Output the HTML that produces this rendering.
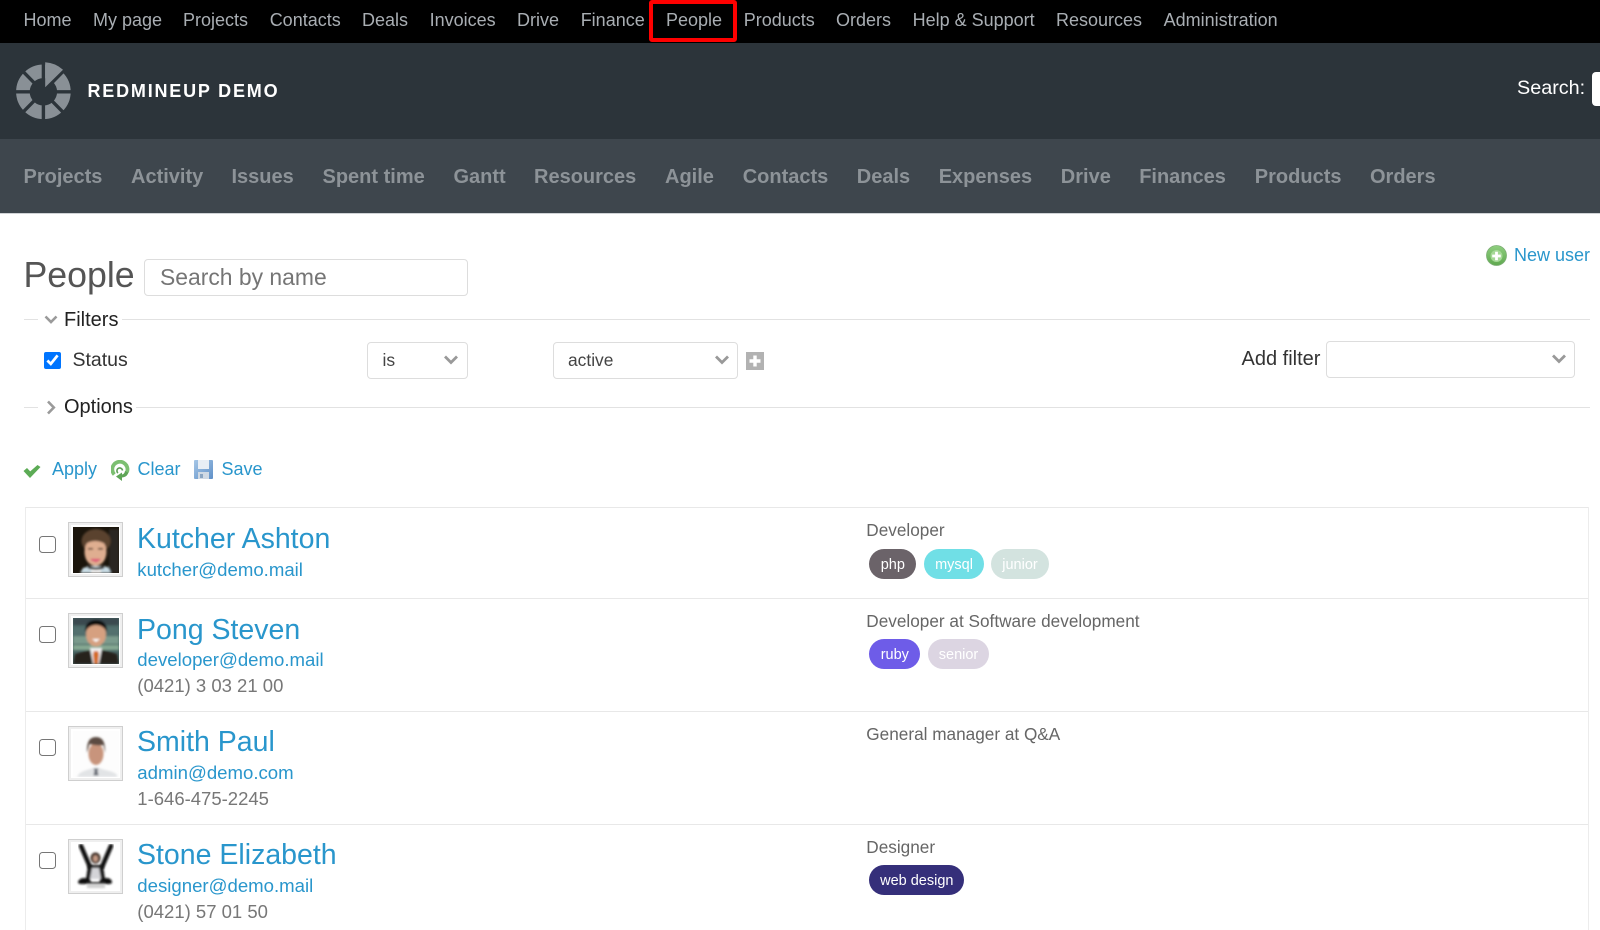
<!DOCTYPE html>
<html><head><meta charset="utf-8"><title>People</title>
<style>
html,body{margin:0;padding:0;background:#fff}
body{width:1600px;height:930px;position:relative;overflow:hidden;font-family:"Liberation Sans",sans-serif}
.t{position:absolute;white-space:nowrap;line-height:0;top:calc(var(--b) - .3465em)}
.b{position:absolute}
.top{font-size:18px;color:#a9aeb3;--b:26px}
.nav{font-size:20px;font-weight:bold;color:#8d9398;--b:184px}
.l{color:#2996cc}
.name{font-size:28.5px;color:#2996cc}
.em{font-size:18.6px;color:#2996cc}
.ph{font-size:18.5px;color:#777}
.role{font-size:17.2px;color:#666}
.sel{position:absolute;background:#fff;border:1px solid #ddd;border-radius:4px;box-sizing:border-box}
.pill{position:absolute;height:30px;border-radius:15px;color:#fff;font-size:14.5px;line-height:32px;text-align:center}
.ck{position:absolute;left:39px;width:17px;height:17px;margin:0}
.ck:not(:checked){appearance:none;-webkit-appearance:none;border:1.5px solid #767676;border-radius:3.5px;background:#fff;box-sizing:border-box}
.av{position:absolute;left:68px;width:55px;height:55px;box-sizing:border-box;border:1px solid #cfcfcf;box-shadow:inset 0 0 0 2px #efefef;background:#fff}
.av svg{position:absolute;left:4px;top:4px}
.hr{position:absolute;height:1px;background:#e2e2e2}
</style></head><body>
<div class="b" style="left:0;top:0;width:1600px;height:43px;background:#000"></div>
<div class="b" style="left:0;top:43px;width:1600px;height:96px;background:#2c343a"></div>
<div class="b" style="left:0;top:139px;width:1600px;height:74px;background:#3e464d"></div>
<div class="b" style="left:0;top:213px;width:1600px;height:1px;background:#d0d3d6"></div>
<div class="b" style="left:649px;top:0;width:88px;height:42px;box-sizing:border-box;border:4px solid #f00;border-radius:3px"></div>
<span class="t top" style="left:23.5px">Home</span>
<span class="t top" style="left:93px">My page</span>
<span class="t top" style="left:183px">Projects</span>
<span class="t top" style="left:269.7px">Contacts</span>
<span class="t top" style="left:362px">Deals</span>
<span class="t top" style="left:429.6px">Invoices</span>
<span class="t top" style="left:517px">Drive</span>
<span class="t top" style="left:580.7px">Finance</span>
<span class="t top" style="left:666px">People</span>
<span class="t top" style="left:743.7px">Products</span>
<span class="t top" style="left:836px">Orders</span>
<span class="t top" style="left:912.6px">Help &amp; Support</span>
<span class="t top" style="left:1056px">Resources</span>
<span class="t top" style="left:1163.6px">Administration</span>

<svg class="b" style="left:0;top:50px" width="90" height="80" viewBox="0 50 90 80">
<circle cx="43.4" cy="91.8" r="20.5" fill="none" stroke="#899096" stroke-width="13.6"/>
<g stroke="#2c343a" stroke-width="3.4">
<line x1="10" y1="91.8" x2="76" y2="91.8"/><line x1="43.4" y1="58" x2="43.4" y2="125"/>
<line x1="20" y1="68.4" x2="66" y2="115.200"/><line x1="20" y1="115.200" x2="66" y2="68.400"/>
</g>
<path d="M45.2 62.300 L45.2 87.300 L63 69.800 A29 29 0 0 0 45.2 62.300Z" fill="#899096"/>
</svg>
<span class="t" style="left:87.5px;--b:97.5px;font-size:18px;font-weight:bold;letter-spacing:1.8px;color:#fff">REDMINEUP DEMO</span>
<span class="t" style="left:1517px;--b:95px;font-size:19.8px;color:#fff">Search:</span>
<div class="b" style="left:1592px;top:72px;width:20px;height:34px;background:#fff;border-radius:4px"></div>

<span class="t nav" style="left:23.5px">Projects</span>
<span class="t nav" style="left:131px">Activity</span>
<span class="t nav" style="left:231.5px">Issues</span>
<span class="t nav" style="left:322.5px">Spent time</span>
<span class="t nav" style="left:453.5px">Gantt</span>
<span class="t nav" style="left:534px">Resources</span>
<span class="t nav" style="left:665px">Agile</span>
<span class="t nav" style="left:742.7px">Contacts</span>
<span class="t nav" style="left:856.8px">Deals</span>
<span class="t nav" style="left:938.7px">Expenses</span>
<span class="t nav" style="left:1060.8px">Drive</span>
<span class="t nav" style="left:1139.2px">Finances</span>
<span class="t nav" style="left:1254.8px">Products</span>
<span class="t nav" style="left:1370px">Orders</span>

<span class="t" style="left:23.5px;--b:287px;font-size:35.7px;color:#555">People</span>
<div class="sel" style="left:144px;top:259px;width:323.500px;height:37px;border-width:1.5px"></div>
<span class="t" style="left:160px;--b:285px;font-size:22.9px;color:#757575">Search by name</span>

<svg class="b" style="left:1486px;top:245px" width="21" height="21" viewBox="0 0 21 21">
<defs><linearGradient id="g1" x1="0" y1="0" x2="0" y2="1"><stop offset="0" stop-color="#8fcf7f"/><stop offset="1" stop-color="#5fa84f"/></linearGradient></defs>
<circle cx="10.5" cy="10.5" r="10" fill="url(#g1)" stroke="#7cae74" stroke-width=".8"/>
<circle cx="10.5" cy="11" r="6" fill="#a5d896"/>
<path d="M10.5 6.700v8.600M6.200 11h8.600" stroke="#fff" stroke-width="2.800"/>
</svg>
<span class="t l" style="left:1514px;--b:261px;font-size:18px">New user</span>

<!-- Filters -->
<div class="hr" style="left:24px;top:319px;width:14px"></div>
<div class="hr" style="left:122px;top:319px;width:1468px"></div>
<svg class="b" style="left:44px;top:314px" width="14" height="11"><path d="M1.500 2.500l5.500 5.500 5.500-5.500" fill="none" stroke="#9a9a9a" stroke-width="2.600"/></svg>
<span class="t" style="left:64px;--b:327px;font-size:20px;color:#222">Filters</span>
<input type="checkbox" checked class="ck" style="left:44px;top:352px">
<span class="t" style="left:72.5px;--b:367px;font-size:19.5px;color:#333">Status</span>

<div class="sel" style="left:367px;top:342px;width:101px;height:37px"></div>
<span class="t" style="left:382.5px;--b:366px;font-size:17.5px;color:#444">is</span>
<svg class="b" style="left:444px;top:354px" width="14" height="12"><path d="M1 2.500l6 6 6-6" fill="none" stroke="#999" stroke-width="2.800"/></svg>
<div class="sel" style="left:553px;top:342px;width:185px;height:37px"></div>
<span class="t" style="left:568px;--b:366px;font-size:17.4px;color:#444">active</span>
<svg class="b" style="left:715px;top:354px" width="14" height="12"><path d="M1 2.500l6 6 6-6" fill="none" stroke="#999" stroke-width="2.800"/></svg>
<svg class="b" style="left:746px;top:352px" width="18" height="18"><rect width="18" height="18" fill="#b2b2b2"/><path d="M9 3.500v11M3.500 9h11" stroke="#fff" stroke-width="3.400"/></svg>

<span class="t" style="left:1241.5px;--b:366px;font-size:20px;color:#333">Add filter</span>
<div class="sel" style="left:1326px;top:341px;width:249px;height:37px"></div>
<svg class="b" style="left:1552px;top:353px" width="14" height="12"><path d="M1 2.500l6 6 6-6" fill="none" stroke="#999" stroke-width="2.800"/></svg>

<!-- Options -->
<div class="hr" style="left:24px;top:407px;width:14px"></div>
<div class="hr" style="left:136px;top:407px;width:1454px"></div>
<svg class="b" style="left:45px;top:400px" width="12" height="15"><path d="M3 1.500l5.800 6L3 13.500" fill="none" stroke="#9a9a9a" stroke-width="2.600"/></svg>
<span class="t" style="left:64px;--b:413.5px;font-size:20px;color:#222">Options</span>

<!-- Actions -->
<svg class="b" style="left:23px;top:462px" width="18" height="17"><path d="M.5 9l3.500-3 3.200 3.400 7.300-6.400 3 2L7 16z" fill="#5cab55"/></svg>
<span class="t l" style="left:52px;--b:475px;font-size:18px">Apply</span>
<svg class="b" style="left:111px;top:460px" width="20" height="22" viewBox="0 0 20 22">
<path d="M3.300 14.500A7.600 7.600 0 1 1 16 12" fill="none" stroke="#7cbf71" stroke-width="3.800"/>
<path d="M11.500 10.500 A2.800 2.800 0 1 0 7 13" fill="none" stroke="#5f9f58" stroke-width="1.600"/>
<path d="M17.500 12.500 Q16 17 11 17.500 L11 21 L5 16.500 L11 12.500 L11 14.500 Q13.500 14 14 11z" fill="#5ea556"/>
</svg>
<span class="t l" style="left:137.5px;--b:475px;font-size:18px">Clear</span>
<svg class="b" style="left:194px;top:460px" width="19" height="19" viewBox="0 0 19 19">
<defs><linearGradient id="g2" x1="0" y1="0" x2="1" y2="1"><stop offset="0" stop-color="#a6c6e6"/><stop offset="1" stop-color="#5f90c8"/></linearGradient></defs>
<rect width="19" height="19" rx="1" fill="url(#g2)"/>
<rect x="4" y="0" width="11" height="9" fill="#e8eef5"/>
<rect x="4" y="12" width="11" height="7" fill="#cfd9e4"/>
<rect x="6" y="14" width="3" height="4" fill="#8aa5c2"/>
</svg>
<span class="t l" style="left:221.5px;--b:475px;font-size:18px">Save</span>

<!-- Table -->
<div class="hr" style="left:25px;top:507px;width:1563px;background:#e8e8e8"></div>
<div class="hr" style="left:25px;top:598px;width:1563px;background:#e8e8e8"></div>
<div class="hr" style="left:25px;top:711px;width:1563px;background:#e8e8e8"></div>
<div class="hr" style="left:25px;top:824px;width:1563px;background:#e8e8e8"></div>
<div class="b" style="left:25px;top:507px;width:1px;height:423px;background:#ececec"></div>
<div class="b" style="left:1588px;top:507px;width:1px;height:423px;background:#ececec"></div>

<input type="checkbox" class="ck" style="top:536px">
<input type="checkbox" class="ck" style="top:626px">
<input type="checkbox" class="ck" style="top:739px">
<input type="checkbox" class="ck" style="top:852px">

<div class="av" style="top:522px"><svg width="46" height="46" viewBox="0 0 46 46">
<defs><filter id="bl" x="-10%" y="-10%" width="120%" height="120%"><feGaussianBlur stdDeviation="1"/></filter></defs>
<rect width="46" height="46" fill="#1b150c"/>
<g filter="url(#bl)">
<path d="M36 2h10v44H36z" fill="#2a2620"/>
<ellipse cx="23" cy="14" rx="14.500" ry="12" fill="#5a422e"/>
<ellipse cx="22.500" cy="25" rx="11" ry="14" fill="#dfae90"/>
<path d="M11 18q11-8 23 0l-1-10H12z" fill="#5a422e"/>
<rect x="15" y="21" width="5" height="1.600" fill="#4a3428"/><rect x="25" y="21" width="5" height="1.600" fill="#4a3428"/>
<path d="M18 32.500h9l-4 2z" fill="#e05a78" stroke="#e05a78" stroke-width="1.500"/>
<path d="M7 46l3-5 7-2h11l7 1 3 6z" fill="#c9dde6"/>
<path d="M14 37.500q9 6 18 0l-1 4q-8 3-16 0z" fill="#2e2620"/>
<rect x="18" y="43" width="10" height="3" fill="#fff"/>
</g></svg></div>

<div class="av" style="top:613px"><svg width="46" height="46" viewBox="0 0 46 46">
<rect width="46" height="46" fill="#4a6664"/>
<g filter="url(#bl)">
<rect y="0" width="46" height="7" fill="#3a4a50"/>
<rect y="9" width="46" height="8" fill="#52706e"/>
<rect y="18" width="46" height="8" fill="#7a9a8c"/>
<rect y="27" width="46" height="5" fill="#86a892"/>
<ellipse cx="23" cy="16.500" rx="10" ry="12" fill="#d6a080"/>
<path d="M12 14q0-12 11-12t11 12q-4-7-11-7t-11 7z" fill="#0f0f0f"/>
<path d="M19 21h8l-4 3z" fill="#fff"/>
<path d="M0 46l2-10 14-4h14l14 4 2 10z" fill="#25201e"/>
<path d="M17 30h12l-3 16h-6z" fill="#f2f2f2"/>
<path d="M21 33h4l1 3-1 10h-4l-1-10z" fill="#d46a22"/>
</g></svg></div>

<div class="av" style="top:726px"><svg width="46" height="46" viewBox="0 0 46 46">
<rect width="46" height="46" fill="#fdfdfd"/>
<g filter="url(#bl)">
<path d="M4 46q2-5 10-7l9-3 9 3q10 2 12 5v2z" fill="#e2e4e6"/>
<ellipse cx="23" cy="23" rx="7.500" ry="11" fill="#c8947c"/>
<path d="M14 22q-1-16 9-16t9 16l-1.500-8q-7 1-14-1z" fill="#5b4c42"/>
<path d="M20.500 37.500h5l-1 2 1 5h-5l1-5z" fill="#6b7078"/>
</g></svg></div>

<div class="av" style="top:839px"><svg width="46" height="46" viewBox="0 0 46 46">
<rect width="46" height="46" fill="#fff"/>
<g filter="url(#bl)" stroke-width="4.500" stroke="#0c0c0c" fill="none" stroke-linecap="round">
<path d="M8 2l9 21"/><path d="M38 2l-9 21"/>
</g>
<g filter="url(#bl)">
<ellipse cx="22.500" cy="14" rx="5" ry="5.500" fill="#3a2a22"/>
<ellipse cx="22.500" cy="14.500" rx="2.500" ry="3.300" fill="#c59a84"/>
<path d="M15 21h15l2 14H13z" fill="#141414"/>
<path d="M19 24h7l2 11H17z" fill="#d4d4d8"/>
<path d="M5 38q2-6 12-3l2 5H8q-3 0-3-2zM39 38q-1-6-12-3l-1 5h10q3 0 3-2z" fill="#0c0c0c"/>
<rect x="14" y="38" width="18" height="2" fill="#333"/>
<rect x="14" y="41" width="18" height="3" fill="#ccc"/>
</g></svg></div>

<span class="t name" style="left:137px;--b:549px">Kutcher Ashton</span>
<span class="t em" style="left:137.300px;--b:576px">kutcher@demo.mail</span>
<span class="t name" style="left:137px;--b:640px">Pong Steven</span>
<span class="t em" style="left:137.300px;--b:666.500px">developer@demo.mail</span>
<span class="t ph" style="left:137.300px;--b:692px">(0421) 3 03 21 00</span>
<span class="t name" style="left:137px;--b:752px">Smith Paul</span>
<span class="t em" style="left:137.300px;--b:779px">admin@demo.com</span>
<span class="t ph" style="left:137.300px;--b:805px">1-646-475-2245</span>
<span class="t name" style="left:137px;--b:865px">Stone Elizabeth</span>
<span class="t em" style="left:137.300px;--b:892px">designer@demo.mail</span>
<span class="t ph" style="left:137.300px;--b:918px">(0421) 57 01 50</span>

<span class="t role" style="left:866.300px;--b:536px">Developer</span>
<span class="t role" style="left:866.300px;--b:626.500px">Developer at Software development</span>
<span class="t role" style="left:866.300px;--b:739.500px">General manager at Q&amp;A</span>
<span class="t role" style="left:866.300px;--b:852.500px">Designer</span>

<div class="pill" style="left:869.300px;top:549px;width:47px;background:#6b6369">php</div>
<div class="pill" style="left:924px;top:549px;width:60px;background:#70dfe6">mysql</div>
<div class="pill" style="left:991px;top:549px;width:58px;background:#d3e3df">junior</div>
<div class="pill" style="left:869.300px;top:639px;width:51px;background:#6e5ce8">ruby</div>
<div class="pill" style="left:928px;top:639px;width:61px;background:#dcd5e2">senior</div>
<div class="pill" style="left:869.300px;top:865px;width:95px;background:#352f7a">web design</div>
</body></html>
